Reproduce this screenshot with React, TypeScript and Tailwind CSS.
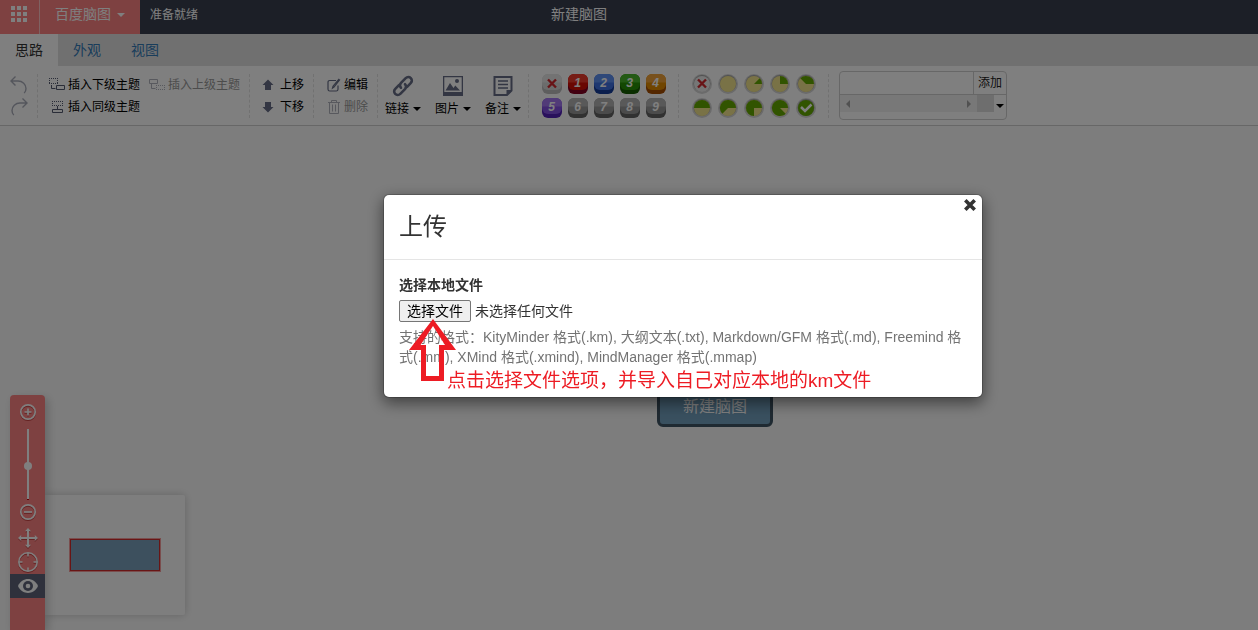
import { useRef, type ReactNode } from "react";

function Caret({ className = "" }: { className?: string }) {
  return (
    <svg className={className} width="8" height="4" viewBox="0 0 8 4" fill="currentColor" aria-hidden="true">
      <path d="M0 0h8L4 4z" />
    </svg>
  );
}

function GridIcon() {
  return (
    <svg width="16" height="16" viewBox="0 0 16 16" fill="#fff" aria-hidden="true">
      {[0, 6, 12].map((y) => [0, 6, 12].map((x) => <rect key={`${x}-${y}`} x={x} y={y} width="4" height="4" />))}
    </svg>
  );
}

function UndoIcon({ flip = false }: { flip?: boolean }) {
  return (
    <svg width="18" height="20" viewBox="0 0 18 20" fill="none" stroke="#a9acb9" strokeWidth="1.4" aria-hidden="true">
      <g transform={flip ? "matrix(-1 0 0 1 18 0)" : undefined}>
        <path d="M5.5 1.5L1 6l4.500 4.500M1.2 6H8c4.500 0 8 3.500 8 7.500 0 1.800-.6 3.300-1.800 4.600" />
      </g>
    </svg>
  );
}

function ChildIcon() {
  return (
    <svg width="16" height="14" viewBox="0 0 16 14" fill="none" stroke="#555b70" aria-hidden="true">
      <path d="M0 .5h9M0 5.500h9M.5 0v6M8.500 0v6" strokeDasharray="1 1" />
      <path d="M2.500 7v3.500h4M7.500 7.500h8v4h-8z" />
    </svg>
  );
}

function ParentIcon() {
  return (
    <svg width="16" height="14" viewBox="0 0 16 14" fill="none" stroke="#b0b2bd" aria-hidden="true">
      <path d="M.5 1.500h8v4h-8zM2.500 6v4.500h4" />
      <path d="M7 7.500h9M7 11.500h9M7.500 7v5M15.500 7v5" strokeDasharray="1 1" />
    </svg>
  );
}

function SiblingIcon() {
  return (
    <svg width="16" height="14" viewBox="0 0 16 14" fill="none" stroke="#555b70" aria-hidden="true">
      <path d="M3 1.500h11M3 5.500h11M3.500 1v5M13.500 1v5" strokeDasharray="1 1" />
      <path d="M8.500 6v3M3.500 9.500h10v3h-10z" />
    </svg>
  );
}

function MoveIcon({ down = false }: { down?: boolean }) {
  return (
    <svg width="12" height="12" viewBox="0 0 12 12" fill="#666d86" aria-hidden="true">
      <path d={down ? "M6 11.500L.5 6H3V1h6v5h2.500z" : "M6 .5L.5 6H3v5h6V6h2.500z"} />
    </svg>
  );
}

function EditIcon() {
  return (
    <svg width="14" height="14" viewBox="0 0 14 14" fill="none" stroke="#666d86" strokeWidth="1.200" aria-hidden="true">
      <path d="M9 2.500H2.800Q1 2.500 1 4.300v6.900Q1 13 2.800 13h6.400Q11 13 11 11.200V7.500" />
      <path d="M13 1.500L7 9 5.500 10 6 8.200 12.200.8" />
    </svg>
  );
}

function TrashIcon() {
  return (
    <svg width="14" height="14" viewBox="0 0 14 14" fill="none" stroke="#b0b2bd" aria-hidden="true">
      <path d="M1 2.500h12M4.500 2V.5h5V2M2.500 3v10.500h9V3M5.500 4.500v7M8.500 4.500v7" />
    </svg>
  );
}

function LinkIcon() {
  return (
    <svg width="22" height="22" viewBox="0 0 22 22" fill="none" stroke="#666d86" strokeWidth="2.600" strokeLinecap="round" aria-hidden="true">
      <path d="M9 12.800c-1.400-1.500-1.300-3.500 0-4.900l4.700-4.700c1.500-1.500 3.700-1.500 5.100-.1 1.400 1.400 1.400 3.600-.1 5.100l-3.600 3.600" />
      <path d="M13 9.200c1.400 1.500 1.300 3.500 0 4.900l-4.700 4.700c-1.500 1.500-3.700 1.500-5.100.1-1.400-1.400-1.400-3.600.1-5.100l3.600-3.600" />
    </svg>
  );
}

function ImageIcon() {
  return (
    <svg width="20" height="20" viewBox="0 0 20 20" fill="#666d86" aria-hidden="true">
      <path fillRule="evenodd" d="M0 0h20v20H0zM1.300 1.300v14.700h17.400v-14.700z" />
      <path d="M2.500 14.500l4.500-7.500 3.500 5 1.800-2.500 4.700 5z" />
      <circle cx="14" cy="5" r="2" />
    </svg>
  );
}

function NoteIcon() {
  return (
    <svg width="20" height="20" viewBox="0 0 20 20" fill="none" stroke="#666d86" strokeWidth="2" aria-hidden="true">
      <path d="M1.500 1h17v13.500L14 19H1.500z" />
      <path d="M5 5h10M5 8.500h10M5 12h10" strokeWidth="1.600" />
      <path d="M19 14h-5.500v5.500z" fill="#666d86" stroke="none" />
    </svg>
  );
}

const priorities = [
  { top: "#ee3a2d", mid: "#d40f05", base: "#840023" },
  { top: "#5f91f2", mid: "#3d6ee0", base: "#143c9a" },
  { top: "#48b42b", mid: "#279004", base: "#155c00" },
  { top: "#f1a33a", mid: "#e08a00", base: "#a84e00" },
  { top: "#a276f0", mid: "#8350e2", base: "#5320b8" },
  { top: "#b3b3b3", mid: "#969696", base: "#626262" },
  { top: "#b3b3b3", mid: "#969696", base: "#626262" },
  { top: "#b3b3b3", mid: "#969696", base: "#626262" },
  { top: "#b3b3b3", mid: "#969696", base: "#626262" },
];

function Cross() {
  return <path d="M6 5.500l8 8M14 5.500l-8 8" stroke="#d0282e" strokeWidth="2.400" fill="none" />;
}

function PriorityIcon({ level }: { level: number }) {
  const c = level === 0 ? { top: "#e6e6e6", mid: "#d9d9d9", base: "#bdbdbd" } : priorities[level - 1];
  return (
    <svg width="20" height="20" viewBox="0 0 20 20" aria-hidden="true">
      <rect y="2" width="20" height="18" rx="6" fill={c.base} />
      <rect width="20" height="16" rx="6" fill={c.mid} />
      <path d="M0 8.500V6a6 6 0 0 1 6-6h8a6 6 0 0 1 6 6v2.500z" fill={c.top} />
      {level === 0 ? (
        <Cross />
      ) : (
        <text x="9.500" y="13" textAnchor="middle" fontSize="12" fontWeight="700" fontStyle="italic" fill="#fff">
          {level}
        </text>
      )}
    </svg>
  );
}

const wedges = [
  "",
  "M10 10H18A8 8 0 0 0 15.660 4.340Z",
  "M10 10H18A8 8 0 0 0 10 2Z",
  "M10 10H18A8 8 0 0 0 4.340 4.340Z",
  "M10 10H18A8 8 0 0 0 2 10Z",
  "M10 10H18A8 8 0 1 0 4.340 15.660Z",
  "M10 10H18A8 8 0 1 0 10 18Z",
  "M10 10H18A8 8 0 1 0 15.660 15.660Z",
];

function ProgressIcon({ step }: { step: number }) {
  return (
    <svg width="20" height="20" viewBox="0 0 20 20" aria-hidden="true">
      <circle cx="10" cy="10" r="10" fill="#d6d6d6" />
      <circle cx="10" cy="9.500" r="8.500" fill="#a4a4a4" />
      <circle cx="10" cy="10" r="8" fill={step === 0 ? "#ececec" : step === 9 ? "#62a800" : "#f3e48c"} />
      {step > 1 && step < 9 && <path d={wedges[step - 1]} fill="#62a800" />}
      {step === 0 && <Cross />}
      {step === 9 && <path d="M5 9l4 4 6.500-6.500" fill="none" stroke="#fff" strokeWidth="2.500" />}
    </svg>
  );
}

function Group({ children, className = "" }: { children: ReactNode; className?: string }) {
  return (
    <div className={`flex h-11 shrink-0 items-center border-r border-dashed border-[#e2e2e2] ${className}`}>{children}</div>
  );
}

function SmallButton({ icon, label, muted = false, wide = false }: { icon: ReactNode; label: string; muted?: boolean; wide?: boolean }) {
  return (
    <button
      type="button"
      disabled={muted}
      className={`flex h-[22px] items-center whitespace-nowrap ${wide ? "gap-1.5" : "gap-[3px]"} ${muted ? "text-[#999]" : "text-black"}`}
    >
      {icon}
      {label}
    </button>
  );
}

function LargeButton({ icon, label }: { icon: ReactNode; label: string }) {
  return (
    <button type="button" className="flex w-[50px] shrink-0 flex-col gap-0.5 text-black">
      <span className="flex h-6 w-9 items-center justify-center">{icon}</span>
      <span className="flex items-center gap-1 leading-[18px]">
        {label}
        <Caret />
      </span>
    </button>
  );
}

function ZoomRail() {
  return (
    <div className="absolute bottom-0 left-2.5 flex h-[235px] w-[35px] flex-col items-center rounded-t bg-[#fc8383] pt-2 shadow-[3px_3px_10px_rgba(0,0,0,0.2)]">
      <button type="button" aria-label="放大" className="drop-shadow-[0_1px_0_#c94444]">
        <svg width="18" height="18" viewBox="0 0 18 18" fill="none" stroke="#fff" strokeWidth="1.700">
          <circle cx="9" cy="9" r="7.200" />
          <path d="M5.500 9h7M9 5.500v7" />
        </svg>
      </button>
      <svg className="mt-2" width="10" height="72" viewBox="0 0 10 72" aria-hidden="true">
        <path d="M4 0h2v70H4z" fill="#fff" />
        <path d="M4 70h2v1H4z" fill="#c0000a" />
        <circle cx="5" cy="37" r="4" fill="#fff" />
      </svg>
      <button type="button" aria-label="缩小" className="mt-0.5 drop-shadow-[0_1px_0_#c94444]">
        <svg width="18" height="18" viewBox="0 0 18 18" fill="none" stroke="#fff" strokeWidth="1.700">
          <circle cx="9" cy="9" r="7.200" />
          <path d="M5 9h8" />
        </svg>
      </button>
      <button type="button" aria-label="拖动" className="mt-[7px] drop-shadow-[0_1px_0_#c94444]">
        <svg width="20" height="20" viewBox="0 0 20 20" fill="#fff">
          <path d="M9 2h2v16H9zM2 9h16v2H2z" />
          <path d="M10 0l3 3.200H7zM10 20l3-3.200H7zM0 10l3.200-3v6zM20 10l-3.200-3v6z" />
        </svg>
      </button>
      <button type="button" aria-label="定位" className="mt-1 drop-shadow-[0_1px_0_#c94444]">
        <svg width="20" height="20" viewBox="0 0 20 20" fill="none" stroke="#fff" strokeWidth="1.600">
          <circle cx="10" cy="10" r="9.200" />
          <path d="M10 1v3.500M10 15.500V19M1 10h3.500M15.500 10H19" />
        </svg>
      </button>
      <button type="button" aria-label="导航" className="mt-0.5 flex h-6 w-full items-center justify-center bg-[#5f6379]">
        <svg width="22" height="16" viewBox="0 0 22 16">
          <path d="M1 8C5-1.300 17-1.300 21 8 17 17.300 5 17.300 1 8z" fill="#fff" />
          <circle cx="11" cy="8" r="5" fill="#5f6379" />
          <circle cx="11" cy="8" r="2.300" fill="#fff" />
        </svg>
      </button>
    </div>
  );
}

function UploadDialog() {
  const fileRef = useRef<HTMLInputElement>(null);
  return (
    <div className="fixed inset-0 flex items-start justify-center bg-black/50 pt-[194px] pl-[108px]">
      <div
        role="dialog"
        aria-modal="true"
        aria-labelledby="upload-title"
        className="relative w-[600px] rounded-md border border-black/20 bg-white bg-clip-padding text-[#333] shadow-[0_5px_15px_rgba(0,0,0,0.5)]"
      >
        <button type="button" aria-label="关闭" className="absolute top-1 right-1.5 text-[#333]">
          <svg width="12" height="12" viewBox="0 0 12 12" fill="none" stroke="currentColor" strokeWidth="3.600">
            <path d="M1.300 1.300l9.400 9.400M10.700 1.300l-9.400 9.400" />
          </svg>
        </button>
        <h3 id="upload-title" className="border-b border-[#e5e5e5] px-[15px] py-4 text-2xl leading-8">
          上传
        </h3>
        <div className="px-[15px] pt-[15px] pb-[30px] text-sm leading-5">
          <label htmlFor="upload-file" className="mb-[5px] block font-bold">
            选择本地文件
          </label>
          <input ref={fileRef} id="upload-file" type="file" className="hidden" />
          <div className="flex items-center gap-1">
            <button
              type="button"
              onClick={() => fileRef.current?.click()}
              className="h-[22px] rounded-xs border border-[#767676] bg-[#efefef] px-[7px] leading-5 text-black"
            >
              选择文件
            </button>
            <span>未选择任何文件</span>
          </div>
          <p className="mt-[5px] text-[#737373]">
            支持的格式：KityMinder 格式(.km), 大纲文本(.txt), Markdown/GFM 格式(.md), Freemind 格式(.mm), XMind
            格式(.xmind), MindManager 格式(.mmap)
          </p>
        </div>
        <svg className="absolute top-[124px] left-[25px]" width="48" height="62" viewBox="0 0 48 62" aria-hidden="true">
          <path
            fill="#ed1c24"
            fillRule="evenodd"
            d="M24 0L47 31H35V62H12V31H0zM24 7L11.500 26H17V57H30V26H36z"
          />
        </svg>
        <p className="absolute top-[174px] left-[63px] text-[19px] leading-6 whitespace-nowrap text-[#ed1c24]">
          点击选择文件选项，并导入自己对应本地的km文件
        </p>
      </div>
    </div>
  );
}

export default function App() {
  return (
    <div className="flex h-screen flex-col overflow-hidden bg-[#fbfbfb] font-['Liberation_Sans','Noto_Sans_CJK_SC',sans-serif] text-xs">
      <header className="grid h-[34px] shrink-0 grid-cols-[1fr_auto_1fr] bg-[#393f4f] pr-[100px] text-white">
        <div className="flex">
          <button type="button" aria-label="菜单" className="flex w-10 items-center justify-center border-r border-[#ffc4c4] bg-[#fc8383] pr-0.5 pb-1.5">
            <GridIcon />
          </button>
          <button type="button" className="flex w-[100px] items-center justify-center gap-1.5 bg-[#fc8383] pb-1.5 text-sm leading-5">
            百度脑图
            <Caret className="mt-0.5" />
          </button>
          <span className="pt-[5px] pl-2.5 leading-5">准备就绪</span>
        </div>
        <h1 className="pt-1 text-sm leading-5">新建脑图</h1>
      </header>

      <nav className="flex h-8 shrink-0 bg-[#e1e1e1] text-sm">
        <a href="#idea" className="flex items-center bg-white px-[15px] text-[#333]">思路</a>
        <a href="#look" className="flex items-center px-[15px] text-[#337ab7]">外观</a>
        <a href="#view" className="flex items-center px-[15px] text-[#337ab7]">视图</a>
      </nav>

      <div className="flex h-[60px] shrink-0 items-start border-b border-[#cfcfcf] bg-white pt-2">
        <Group className="w-[38px] pl-2.5">
          <div className="flex flex-col gap-0.5">
            <button type="button" aria-label="撤销"><UndoIcon /></button>
            <button type="button" aria-label="重做"><UndoIcon flip /></button>
          </div>
        </Group>
        <Group className="w-[212px] gap-[9px] pl-[11px]">
          <div className="flex flex-col">
            <SmallButton icon={<ChildIcon />} label="插入下级主题" />
            <SmallButton icon={<SiblingIcon />} label="插入同级主题" />
          </div>
          <div className="flex h-11 items-start">
            <SmallButton icon={<ParentIcon />} label="插入上级主题" muted />
          </div>
        </Group>
        <Group className="w-16 pl-3">
          <div className="flex flex-col">
            <SmallButton icon={<MoveIcon />} label="上移" wide />
            <SmallButton icon={<MoveIcon down />} label="下移" wide />
          </div>
        </Group>
        <Group className="w-16 pl-[13px]">
          <div className="flex flex-col">
            <SmallButton icon={<EditIcon />} label="编辑" />
            <SmallButton icon={<TrashIcon />} label="删除" muted />
          </div>
        </Group>
        <Group className="w-[151px] pl-[7px]">
          <LargeButton icon={<LinkIcon />} label="链接" />
          <LargeButton icon={<ImageIcon />} label="图片" />
          <LargeButton icon={<NoteIcon />} label="备注" />
        </Group>
        <Group className="w-[150px] pl-[13px]">
          <div className="grid grid-cols-5 gap-x-1.5 gap-y-1">
            {[0, 1, 2, 3, 4, 5, 6, 7, 8, 9].map((n) => (
              <button key={n} type="button" aria-label={`优先级 ${n}`}><PriorityIcon level={n} /></button>
            ))}
          </div>
        </Group>
        <Group className="w-[150px] pl-[13px]">
          <div className="grid grid-cols-5 gap-x-1.5 gap-y-1">
            {[0, 1, 2, 3, 4, 5, 6, 7, 8, 9].map((n) => (
              <button key={n} type="button" aria-label={`进度 ${n}`}><ProgressIcon step={n} /></button>
            ))}
          </div>
        </Group>
        <div className="-mt-[3px] ml-2.5 h-[49px] w-[168px] shrink-0 overflow-hidden rounded border border-[#cfcfcf]">
          <div className="flex h-[23px] border-b border-[#cfcfcf]">
            <input aria-label="资源" className="min-w-0 flex-1 border-r border-[#cfcfcf] px-1 outline-none" />
            <button type="button" className="w-8 leading-5 text-[#222]">添加</button>
          </div>
          <div className="flex h-[17px]">
            <div className="flex flex-1 items-center justify-between bg-[#f1f1f1] px-1.5 text-[#a3a3a3]">
              <svg width="4" height="8" viewBox="0 0 4 8" fill="currentColor" aria-hidden="true"><path d="M4 0v8L0 4z" /></svg>
              <svg width="4" height="8" viewBox="0 0 4 8" fill="currentColor" aria-hidden="true"><path d="M0 0v8l4-4z" /></svg>
            </div>
            <div className="w-[17px] bg-[#dcdcdc]" />
            <button type="button" aria-label="展开" className="flex w-3 items-center justify-center pt-1 text-black"><Caret /></button>
          </div>
        </div>
      </div>

      <main className="relative flex-1">
        <div className="absolute top-[261px] left-[657px] flex h-10 w-[116px] items-center justify-center rounded-md border-3 border-[#3f5464] bg-[#73a1bf] text-base text-white">
          新建脑图
        </div>
        <div className="absolute bottom-[15px] left-[45px] flex h-[120px] w-[140px] items-center justify-center rounded-r-xs bg-[#fdfdfd] shadow-[0_0_8px_rgba(0,0,0,0.2)]">
          <div className="h-[34px] w-[92px] border border-[#f59a9a]">
            <div className="h-full border border-[#d02a2a] bg-[#7aa1bd]" />
          </div>
        </div>
        <ZoomRail />
      </main>

      <UploadDialog />
    </div>
  );
}
